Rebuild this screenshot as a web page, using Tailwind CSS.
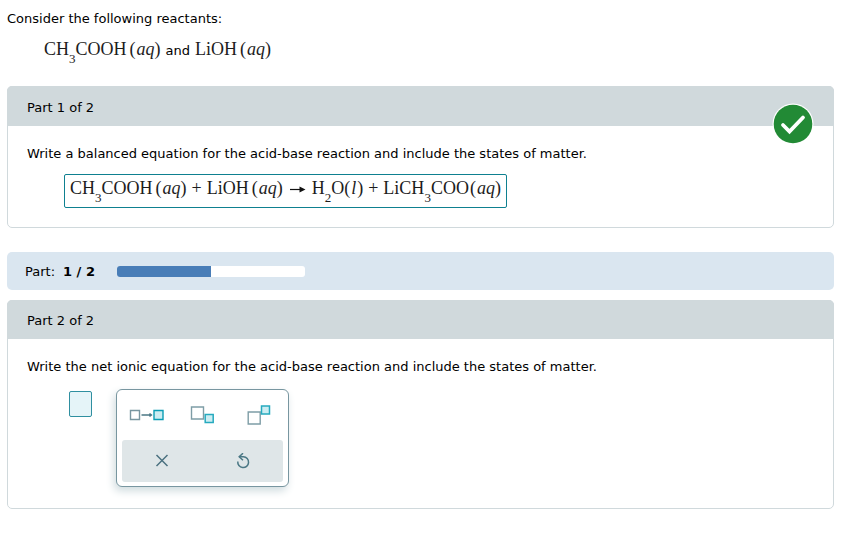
<!DOCTYPE html>
<html lang="en">
<head>
    <meta charset="UTF-8">
    <meta name="viewport" content="width=device-width, initial-scale=1.0">
    <title>Acid-Base Reactions</title>
    <script src="https://cdn.jsdelivr.net/npm/@tailwindcss/browser@4"></script>
</head>
<body class="bg-white text-black font-[Verdana,'DejaVu_Sans',sans-serif] text-[13px] leading-5 pl-[7px] pr-[10px] pt-[9px]">
    <p>Consider the following reactants:</p>
    <p class="mt-[6px] ml-[37px] h-7 leading-7 flex items-baseline gap-[5px]">
        <span class="font-['Liberation_Serif',serif] text-[18px] text-[#1c1c1c]">CH<sub class="text-[13px] align-[-5px]">3</sub>COOH<span class="ml-[3px] mr-px">(</span><i>aq</i>)</span>
        <span>and</span>
        <span class="font-['Liberation_Serif',serif] text-[18px] text-[#1c1c1c]">LiOH<span class="ml-[3px] mr-px">(</span><i>aq</i>)</span>
    </p>

    <section class="relative mt-[23px] h-[142px] border border-[#d0d9dc] rounded-[5px]">
        <h2 class="-mt-px -mx-px h-10 px-5 pt-3 bg-[#d0d9dc] rounded-t-[5px]">Part 1 of 2</h2>
        <svg class="absolute top-4 right-[19px] size-[42px]" viewBox="0 0 42 42" role="img" aria-label="Correct">
            <circle cx="21" cy="21" r="20.5" fill="#fff"/>
            <circle cx="21" cy="21" r="19.3" fill="#228a35"/>
            <path d="M11 22 L17.5 28.5 L31 14.5" fill="none" stroke="#fff" stroke-width="3.8" stroke-linecap="round" stroke-linejoin="miter"/>
        </svg>
        <div class="px-[19px] pt-[18px]">
            <p>Write a balanced equation for the acid-base reaction and include the states of matter.</p>
            <div class="mt-[10px] ml-[37px] w-fit h-[34px] px-[5px] flex items-baseline gap-[5px] border border-[#0e8090] rounded-[2px] font-['Liberation_Serif',serif] text-[18px] text-[#1c1c1c] leading-[26px]">
                <span>CH<sub class="text-[13px] align-[-5px]">3</sub>COOH<span class="ml-[3px] mr-px">(</span><i>aq</i>)</span>
                <span>+</span>
                <span>LiOH<span class="ml-[3px] mr-px">(</span><i>aq</i>)</span>
                <svg class="w-[18px] h-[9px] ml-px" viewBox="0 0 18 9" aria-label="yields"><path d="M1 4.5H13" stroke="#111" stroke-width="1.2"/><path d="M10.5 1.5L16.5 4.5L10.5 7.5Z" fill="#111"/></svg>
                <span>H<sub class="text-[13px] align-[-5px]">2</sub>O<span class="mr-px">(</span><i class="mr-px">l</i>)</span>
                <span>+</span>
                <span>LiCH<sub class="text-[13px] align-[-5px]">3</sub>COO<span class="ml-px mr-px">(</span><i>aq</i>)</span>
            </div>
        </div>
    </section>

    <div class="mt-6 h-[38px] px-[18px] flex items-center bg-[#dae6f0] rounded-[5px]">
        <span class="flex gap-2 w-[92px] pt-px">Part: <b>1 / 2</b></span>
        <div class="w-[188px] h-[11px] bg-white rounded-[3px] overflow-hidden">
            <div class="h-full bg-[#487db7]" style="width: 50%"></div>
        </div>
    </div>

    <section class="mt-[10px] h-[209px] border border-[#d0d9dc] rounded-[5px]">
        <h2 class="-mt-px -mx-px h-[39px] px-5 pt-[11px] bg-[#d0d9dc] rounded-t-[5px]">Part 2 of 2</h2>
        <div class="px-[19px] pt-[18px]">
            <label for="answer">Write the net ionic equation for the acid-base reaction and include the states of matter.</label>
            <div class="mt-3 ml-[42px] flex items-start">
                <input type="text" id="answer" class="mt-[2px] w-[23px] h-[26px] bg-[#e5f4f8] border border-[#2f8fa0] rounded-[2px]">
                <div class="ml-6 w-[173px] h-[98px] border border-[#7896a0] rounded-[6px] bg-white shadow-[-2px_4px_8px_#d0dcdf]">
                    <div class="grid grid-cols-3 h-[50px] px-px">
                        <button type="button" class="grid place-items-center" aria-label="Reaction arrow">
                            <svg class="w-9 h-6" viewBox="0 0 36 24" fill="none">
                                <path d="M2.5 7.5h9v9h-9z" stroke="#7896a0" stroke-width="1.4"/>
                                <path d="M13.5 12h10M21.5 10.5l2 1.5l-2 1.5" stroke="#4b7885" stroke-width="1.4"/>
                                <path d="M26 7.5h9v9h-9z" fill="#ccedf2" stroke="#0a9db5" stroke-width="1.4"/>
                            </svg>
                        </button>
                        <button type="button" class="grid place-items-center" aria-label="Subscript">
                            <svg class="w-6 h-6" viewBox="0 0 24 24" fill="none">
                                <path d="M1.5 4h12v12h-12z" stroke="#7e9da6" stroke-width="1.4"/>
                                <path d="M15.2 11.5h8v8h-8z" fill="#ccedf2" stroke="#26aabf" stroke-width="1.5"/>
                            </svg>
                        </button>
                        <button type="button" class="grid place-items-center" aria-label="Superscript">
                            <svg class="w-6 h-6" viewBox="0 0 24 24" fill="none">
                                <path d="M1.2 9h12v12h-12z" stroke="#7e9da6" stroke-width="1.4"/>
                                <path d="M14.5 3h8v8h-8z" fill="#ccedf2" stroke="#26aabf" stroke-width="1.5"/>
                            </svg>
                        </button>
                    </div>
                    <div class="grid grid-cols-2 h-[42px] mx-[5px] bg-[#dfe6e8] rounded-[3px]">
                        <button type="button" class="grid place-items-center" aria-label="Clear">
                            <svg class="size-4" viewBox="0 0 16 16"><path d="M2.5 2l11 11M13.5 2l-11 11" stroke="#4b7180" stroke-width="1.5"/></svg>
                        </button>
                        <button type="button" class="grid place-items-center" aria-label="Reset">
                            <svg class="size-4" viewBox="0 0 16 16" fill="none" stroke="#4b7885" stroke-width="1.5"><path d="M2.8 8.5A5.4 5.4 0 1 0 8.4 3.8H4"/><path d="M8 .2L4.2 3.8L8 7.2"/></svg>
                        </button>
                    </div>
                </div>
            </div>
        </div>
    </section>
</body>
</html>
